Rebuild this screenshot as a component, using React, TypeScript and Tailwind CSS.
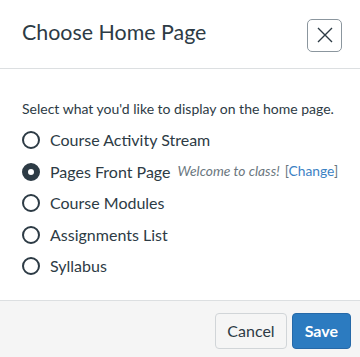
import { useState } from "react";

const options = [
  "Course Activity Stream",
  "Pages Front Page",
  "Course Modules",
  "Assignments List",
  "Syllabus",
];

function Radio({ checked }: { checked: boolean }) {
  return (
    <span
      className={
        checked
          ? "block h-[18px] w-[18px] shrink-0 rounded-full border-[6px] border-[#2d3b45] bg-white"
          : "block h-[18px] w-[18px] shrink-0 rounded-full border-2 border-[#2d3b45] bg-white"
      }
    />
  );
}

export default function App() {
  const [selected, setSelected] = useState(1);

  return (
    <div className="flex h-[357px] w-[360px] flex-col bg-white font-['Lato','Noto_Sans',sans-serif] text-[#2d3b45]">
      <header className="flex h-[69px] shrink-0 items-center justify-between border-b border-[#dcdfe1] pl-[22px] pr-[18px]">
        <h1 className="mb-[3px] text-[21.4px] leading-none">Choose Home Page</h1>
        <button className="mt-[2px] flex h-[33px] w-[35px] items-center justify-center rounded-[5px] border border-[#8b969e] bg-white">
          <svg width="18" height="18" viewBox="0 0 18 18" fill="none" stroke="#2d3b45" strokeWidth="1.4">
            <path d="M2 2 L16 16 M16 2 L2 16" />
          </svg>
        </button>
      </header>

      <main className="flex-1 pl-[22px] pt-[30px]">
        <p className="text-[14px] leading-[20px]">Select what you'd like to display on the home page.</p>
        <ul className="mt-[12px] flex flex-col gap-[13.5px]">
          {options.map((label, i) => (
            <li
              key={label}
              className="flex h-[18px] cursor-pointer items-center gap-[10px] text-[16px]"
              onClick={() => setSelected(i)}
            >
              <Radio checked={selected === i} />
              <span>{label}</span>
              {i === 1 && (
                <span className="ml-[-3px] flex items-center gap-[5px] text-[13.8px]">
                  <em className="text-[#6b7780]">Welcome to class!</em>
                  <span className="text-[#6b7780]">
                    [<span className="text-[#3c82c4]">Change</span>]
                  </span>
                </span>
              )}
            </li>
          ))}
        </ul>
      </main>

      <footer className="flex h-[57px] shrink-0 items-start justify-end gap-[5px] border-t border-[#dcdfe1] bg-[#f5f5f5] pr-[9px] pt-[12px]">
        <button className="h-[36px] rounded-[4px] border border-[#d1d5d8] bg-[#f5f5f5] px-[11px] text-[16px] text-[#2d3b45]">
          Cancel
        </button>
        <button className="h-[36px] rounded-[4px] border border-[#2669a8] bg-[#2c7bc0] px-[12px] text-[16px] font-bold text-white">
          Save
        </button>
      </footer>
    </div>
  );
}
